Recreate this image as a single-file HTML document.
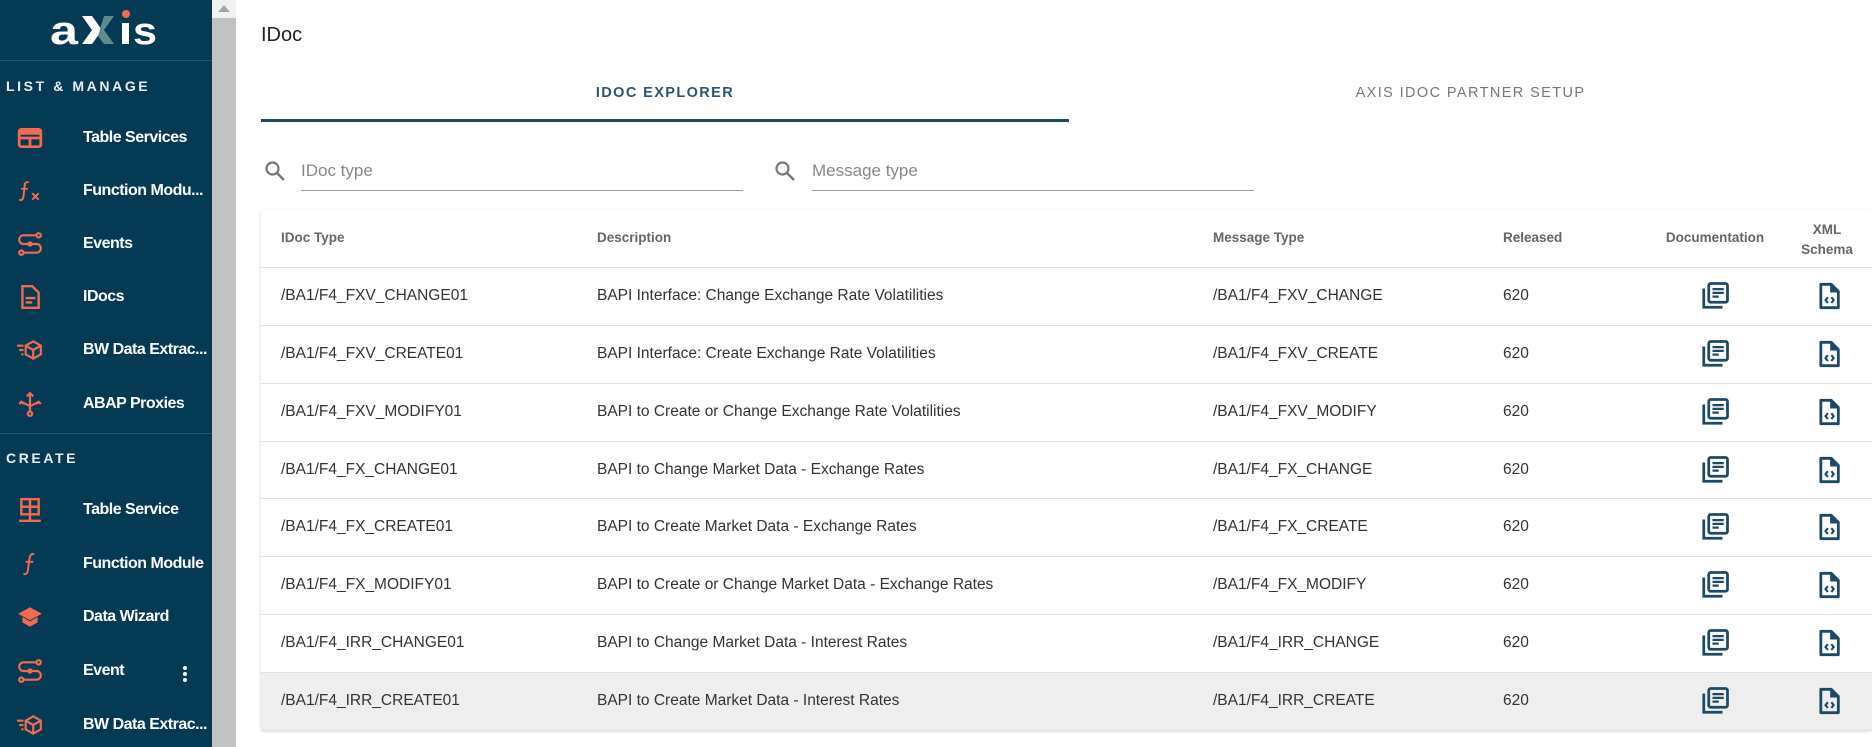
<!DOCTYPE html>
<html><head><meta charset="utf-8"><style>
*{margin:0;padding:0;box-sizing:border-box}
body{width:1872px;height:747px;overflow:hidden;background:#fff;font-family:"Liberation Sans",Arial,sans-serif;position:relative}
.sb{position:absolute;left:0;top:0;width:212px;height:747px;background:#053a55}
.sep{position:absolute;left:0;width:212px;height:1px;background:#1d5470}
.sec{position:absolute;left:6px;color:#e6edf2;font-weight:bold;font-size:14px;letter-spacing:2.6px}
.it{position:absolute;left:83px;color:#fff;font-weight:bold;font-size:16px;letter-spacing:-0.5px;white-space:nowrap}
.ic{position:absolute;left:17px;width:26px;height:26px}
.scr{position:absolute;left:212px;top:0;width:24px;height:747px;background:#c1c1c1}
.scr .top{position:absolute;left:0;top:0;width:24px;height:18px;background:#f1f1f1}
.abs{position:absolute;white-space:nowrap}
.hdr{position:absolute;font-size:13.5px;font-weight:bold;color:#666}
.cell{position:absolute;font-size:15.5px;color:#333;white-space:nowrap}
.line{position:absolute;left:261px;width:1611px;height:1px;background:#e0e0e0}
</style></head><body>
<div class="sb">
  <svg style="position:absolute;left:48px;top:8px" width="112" height="40" viewBox="0 0 112 40">
    <text x="2" y="36" font-family="Liberation Sans" font-weight="bold" font-size="40" fill="#fff" textLength="28" lengthAdjust="spacingAndGlyphs">a</text>
    <polygon points="34,8 44,8 54,22 44,36 34,36 44,22" fill="#fff"/>
    <polygon points="56,8 66,8 56,22 66,36 56,36 50,28" fill="#5f8b8b"/>
    <rect x="74" y="15" width="7" height="21" fill="#fff"/>
    <circle cx="78" cy="6" r="4" fill="#f26b50"/>
    <text x="85" y="36" font-family="Liberation Sans" font-weight="bold" font-size="38" fill="#fff" textLength="24" lengthAdjust="spacingAndGlyphs">s</text>
  </svg>
  <div class="sep" style="top:60px"></div>
  <div class="sec" style="top:78px">LIST &amp; MANAGE</div>
  <svg class="ic" style="top:125px" viewBox="0 0 24 24"><rect x="2" y="4" width="20" height="16" rx="2" fill="none" stroke="#f26b50" stroke-width="2.5"/><path d="M2 12H22M12 12V20" stroke="#f26b50" stroke-width="2.5"/><rect x="2" y="4" width="20" height="5" fill="#f26b50"/></svg>
  <div class="it" style="top:129px">Table Services</div>
  <svg class="ic" style="top:178px" viewBox="0 0 24 24"><path d="M11 4C8 3 7 5 7 8L6 17C5.5 20 4 21 2 20M4 10H10" fill="none" stroke="#f26b50" stroke-width="1.8"/><path d="M14 14L20 20M20 14L14 20" stroke="#f26b50" stroke-width="1.8"/></svg>
  <div class="it" style="top:182px">Function Modu...</div>
  <svg class="ic" style="top:231px" viewBox="0 0 24 24"><g fill="none" stroke="#f26b50" stroke-width="2"><circle cx="20" cy="4" r="2"/><circle cx="4" cy="20" r="2"/><path d="M18 4H6a4 4 0 0 0 0 8h12a4 4 0 0 1 0 8H6"/></g><circle cx="12" cy="12" r="2.5" fill="#f26b50"/></svg>
  <div class="it" style="top:235px">Events</div>
  <svg class="ic" style="top:284px" viewBox="0 0 24 24"><path d="M5 2H14L20 8V22H5Z" fill="none" stroke="#f26b50" stroke-width="2.2"/><path d="M8 13H17M8 17H14" stroke="#f26b50" stroke-width="2.2"/></svg>
  <div class="it" style="top:288px">IDocs</div>
  <svg class="ic" style="top:337px" viewBox="0 0 24 24"><path d="M0 8H6M2 12H6M4 16H6" stroke="#f26b50" stroke-width="2"/><path d="M15 4L22 8V16L15 20L8 16V8Z M8 8L15 12L22 8M15 12V20" fill="none" stroke="#f26b50" stroke-width="2"/></svg>
  <div class="it" style="top:341px">BW Data Extrac...</div>
  <svg class="ic" style="top:391px" viewBox="0 0 24 24"><path d="M12 2V20M12 14L4 10M12 14L20 10M9 5L12 2L15 5M2 12L4 10L6 12M18 12L20 10L22 12" fill="none" stroke="#f26b50" stroke-width="2"/><circle cx="12" cy="21" r="2" fill="none" stroke="#f26b50" stroke-width="2"/></svg>
  <div class="it" style="top:395px">ABAP Proxies</div>
  <div class="sep" style="top:433px"></div>
  <div class="sec" style="top:450px">CREATE</div>
  <svg class="ic" style="top:497px" viewBox="0 0 24 24"><rect x="4" y="2" width="16" height="14" fill="none" stroke="#f26b50" stroke-width="2.2"/><path d="M4 9H20M12 2V22M2 22H22" stroke="#f26b50" stroke-width="2.2"/></svg>
  <div class="it" style="top:501px">Table Service</div>
  <svg class="ic" style="top:551px" viewBox="0 0 24 24"><path d="M16 3C13 2 12 4 11.5 7L10 18C9.5 21 8 22 6 21M8 10H15" fill="none" stroke="#f26b50" stroke-width="1.8"/></svg>
  <div class="it" style="top:555px">Function Module</div>
  <svg class="ic" style="top:604px" viewBox="0 0 24 24"><path d="M12 3L1 9L12 15L23 9Z" fill="#f26b50"/><path d="M5 12V17L12 21L19 17V12L12 16Z" fill="#f26b50"/></svg>
  <div class="it" style="top:608px">Data Wizard</div>
  <svg class="ic" style="top:658px" viewBox="0 0 24 24"><g fill="none" stroke="#f26b50" stroke-width="2"><circle cx="20" cy="4" r="2"/><circle cx="4" cy="20" r="2"/><path d="M18 4H6a4 4 0 0 0 0 8h12a4 4 0 0 1 0 8H6"/></g><circle cx="12" cy="12" r="2.5" fill="#f26b50"/></svg>
  <div class="it" style="top:662px">Event</div>
  <div style="position:absolute;left:183px;top:666px;width:4px">
    <div style="width:4px;height:4px;background:#fff;border-radius:2px;margin-bottom:2px"></div><div style="width:4px;height:4px;background:#fff;border-radius:2px;margin-bottom:2px"></div><div style="width:4px;height:4px;background:#fff;border-radius:2px"></div></div>
  <svg class="ic" style="top:712px" viewBox="0 0 24 24"><path d="M0 8H6M2 12H6M4 16H6" stroke="#f26b50" stroke-width="2"/><path d="M15 4L22 8V16L15 20L8 16V8Z M8 8L15 12L22 8M15 12V20" fill="none" stroke="#f26b50" stroke-width="2"/></svg>
  <div class="it" style="top:716px">BW Data Extrac...</div>
</div>
<div class="scr"><div class="top"></div><svg style="position:absolute;left:6px;top:5px" width="12" height="7"><path d="M0 7L6 0L12 7Z" fill="#a3a3a3"/></svg></div>

<div class="abs" style="left:261px;top:24px;font-size:20px;color:#222">IDoc</div>
<div class="abs" style="left:261px;top:85px;width:808px;text-align:center;font-size:14.5px;font-weight:bold;letter-spacing:1.4px;color:#2b5671">IDOC EXPLORER</div>
<div class="abs" style="left:1069px;top:85px;width:803px;text-align:center;font-size:14.5px;letter-spacing:1.4px;color:#777">AXIS IDOC PARTNER SETUP</div>
<div style="position:absolute;left:261px;top:119px;width:808px;height:3px;background:#1c4a66"></div>

<svg style="position:absolute;left:263px;top:159px" width="24" height="24" viewBox="0 0 24 24"><circle cx="9.5" cy="9.5" r="6" fill="none" stroke="#777" stroke-width="2.2"/><path d="M14 14L21 21" stroke="#777" stroke-width="2.4"/></svg>
<div class="abs" style="left:301px;top:161px;font-size:17px;color:#888">IDoc type</div>
<div style="position:absolute;left:301px;top:190px;width:442px;height:1px;background:#999"></div>
<svg style="position:absolute;left:773px;top:159px" width="24" height="24" viewBox="0 0 24 24"><circle cx="9.5" cy="9.5" r="6" fill="none" stroke="#777" stroke-width="2.2"/><path d="M14 14L21 21" stroke="#777" stroke-width="2.4"/></svg>
<div class="abs" style="left:812px;top:161px;font-size:17px;color:#888">Message type</div>
<div style="position:absolute;left:812px;top:190px;width:442px;height:1px;background:#999"></div>

<div style="position:absolute;left:261px;top:210px;width:1611px;height:520px;background:#fff;box-shadow:0 1px 3px rgba(0,0,0,.2);border-radius:3px"></div>
<div style="position:absolute;left:261px;top:672px;width:1611px;height:58px;background:#eeeeee"></div>
<div class="hdr" style="left:281px;top:230px">IDoc Type</div>
<div class="hdr" style="left:597px;top:230px">Description</div>
<div class="hdr" style="left:1213px;top:230px">Message Type</div>
<div class="hdr" style="left:1503px;top:230px">Released</div>
<div class="hdr" style="left:1655px;top:230px;width:120px;text-align:center">Documentation</div>
<div class="hdr" style="left:1797px;top:220px;width:60px;text-align:center;line-height:20px">XML<br>Schema</div>
<div id="rows"></div>
<script>
var d=[["/BA1/F4_FXV_CHANGE01","BAPI Interface: Change Exchange Rate Volatilities","/BA1/F4_FXV_CHANGE"],
["/BA1/F4_FXV_CREATE01","BAPI Interface: Create Exchange Rate Volatilities","/BA1/F4_FXV_CREATE"],
["/BA1/F4_FXV_MODIFY01","BAPI to Create or Change Exchange Rate Volatilities","/BA1/F4_FXV_MODIFY"],
["/BA1/F4_FX_CHANGE01","BAPI to Change Market Data - Exchange Rates","/BA1/F4_FX_CHANGE"],
["/BA1/F4_FX_CREATE01","BAPI to Create Market Data - Exchange Rates","/BA1/F4_FX_CREATE"],
["/BA1/F4_FX_MODIFY01","BAPI to Create or Change Market Data - Exchange Rates","/BA1/F4_FX_MODIFY"],
["/BA1/F4_IRR_CHANGE01","BAPI to Change Market Data - Interest Rates","/BA1/F4_IRR_CHANGE"],
["/BA1/F4_IRR_CREATE01","BAPI to Create Market Data - Interest Rates","/BA1/F4_IRR_CREATE"]];
var tops=[267,325,383,441,498,556,614,672],h="";
var doc='<svg width="30" height="30" viewBox="0 0 24 24"><path d="M3 6V21H18" fill="none" stroke="#1c4a66" stroke-width="2.2"/><rect x="7" y="2" width="15" height="15" rx="1.5" fill="none" stroke="#1c4a66" stroke-width="2.2"/><path d="M10 6.5H19M10 9.5H19M10 12.5H15" stroke="#1c4a66" stroke-width="1.8"/></svg>';
var xml='<svg width="24" height="28" viewBox="0 0 20 24"><path d="M3 2H12L18 8V22H3Z" fill="none" stroke="#1c4a66" stroke-width="2.4" stroke-linejoin="round"/><path d="M11 2V9H18Z" fill="#1c4a66"/><path d="M9 13L7 15.5L9 18M12 13L14 15.5L12 18" fill="none" stroke="#1c4a66" stroke-width="1.8"/></svg>';
for(var i=0;i<8;i++){var t=tops[i];
h+='<div class="line" style="top:'+t+'px"></div>';
h+='<div class="cell" style="left:281px;top:'+(t+20)+'px">'+d[i][0]+'</div>';
h+='<div class="cell" style="left:597px;top:'+(t+20)+'px">'+d[i][1]+'</div>';
h+='<div class="cell" style="left:1213px;top:'+(t+20)+'px">'+d[i][2]+'</div>';
h+='<div class="cell" style="left:1503px;top:'+(t+20)+'px">620</div>';
h+='<div style="position:absolute;left:1700px;top:'+(t+14)+'px">'+doc+'</div>';
h+='<div style="position:absolute;left:1817px;top:'+(t+15)+'px">'+xml+'</div>';}
h+='<div class="line" style="top:730px"></div>';
document.getElementById("rows").innerHTML=h;
</script>
</body></html>
